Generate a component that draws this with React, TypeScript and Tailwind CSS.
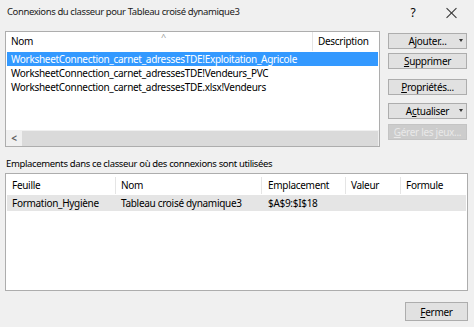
import React from 'react'

const font = { fontFamily: '"Noto Sans", "Open Sans", sans-serif' }

function Btn({ children, arrow = false, disabled = false, className = '' }: { children: React.ReactNode; arrow?: boolean; disabled?: boolean; className?: string }) {
  return (
    <div
      className={`relative h-[16px] flex items-center justify-center border text-[10px] leading-none whitespace-nowrap ${
        disabled ? 'bg-[#cccccc] border-[#c4c4c4] text-[#e9e9e9]' : 'bg-[#e1e1e1] border-[#adadad] text-black'
      } ${className}`}
    >
      <span>{children}</span>
      {arrow && <span className="absolute right-[3px] top-[5px] w-0 h-0 border-l-[2.5px] border-r-[2.5px] border-t-[3px] border-l-transparent border-r-transparent border-t-[#333]" />}
    </div>
  )
}

export default function App() {
  const rows = [
    'WorksheetConnection_carnet_adressesTDE!Exploitation_Agricole',
    'WorksheetConnection_carnet_adressesTDE!Vendeurs_PVC',
    'WorksheetConnection_carnet_adressesTDE.xlsx!Vendeurs',
  ]

  return (
    <div style={font} className="w-[474px] h-[327px] bg-[#f0f0f0] text-black text-[10px] tracking-[-0.3px] overflow-hidden relative">
      {/* Title bar */}
      <div className="h-[31px] flex items-center pl-[7px]">
        <span className="text-[9.5px] tracking-[-0.4px] text-[#1a1a1a] -mt-[6px]">Connexions du classeur pour Tableau croisé dynamique3</span>
        <span className="ml-auto w-[10px] text-center text-[12px] -mt-[6px]">?</span>
        <span className="ml-[28px] mr-[16px] w-[12px] -mt-[6px] relative h-[12px]">
          <span className="absolute left-[5px] top-[-1px] w-[1px] h-[14px] bg-[#333] rotate-45" />
          <span className="absolute left-[5px] top-[-1px] w-[1px] h-[14px] bg-[#333] -rotate-45" />
        </span>
      </div>

      <div className="flex pl-[5px]">
        {/* Connections list */}
        <div className="w-[375px] h-[116px] border border-[#adadad] bg-white flex flex-col relative">
          <span className="absolute left-[155px] -top-[2px] text-[9px] text-[#999]">^</span>
          <div className="h-[20px] flex items-end pb-[1px]">
            <div className="w-[307px] pl-[5px] border-r border-[#e5e5e5] h-[19px] flex items-center">Nom</div>
            <div className="pl-[5px] h-[19px] flex items-center">Description</div>
          </div>
          <div className="flex flex-col">
            {rows.map((r, i) => (
              <div key={r} className={`h-[14px] leading-[14px] mx-[1px] pl-[4px] whitespace-nowrap ${i === 0 ? 'bg-[#3399ff] text-white' : ''}`}>
                {r}
              </div>
            ))}
          </div>
          <div className="mt-auto h-[16px] bg-[#f0f0f0] flex items-center">
            <span className="w-[16px] text-center text-[10px] font-bold text-[#606060]">&lt;</span>
            <div className="flex-1 h-[15px] bg-[#dadada] mr-[1px]" />
          </div>
        </div>

        {/* Buttons */}
        <div className="ml-[8px] w-[79px] flex flex-col pt-[2px]">
          <Btn arrow>A<u>j</u>outer...</Btn>
          <Btn className="mt-[4px]"><u>S</u>upprimer</Btn>
          <Btn className="mt-[10px]"><u>P</u>ropriétés...</Btn>
          <Btn arrow className="mt-[8px]">A<u>c</u>tualiser</Btn>
          <Btn disabled className="mt-[5px]"><u>G</u>érer les jeux...</Btn>
        </div>
      </div>

      <div className="pl-[6px] mt-[9px] h-[16px] leading-[16px] text-[9.5px] tracking-[-0.35px]">Emplacements dans ce classeur où des connexions sont utilisées</div>

      {/* Locations list */}
      <div className="ml-[5px] mt-[1px] w-[463px] h-[118px] border border-[#adadad] bg-white">
        <div className="h-[21px] flex items-center pt-[2px]">
          <div className="w-[110px] pl-[6px] border-r border-[#e5e5e5] h-[17px] flex items-center">Feuille</div>
          <div className="w-[146px] pl-[5px] border-r border-[#e5e5e5] h-[17px] flex items-center">Nom</div>
          <div className="w-[84px] pl-[6px] border-r border-[#e5e5e5] h-[17px] flex items-center">Emplacement</div>
          <div className="w-[55px] pl-[5px] border-r border-[#e5e5e5] h-[17px] flex items-center">Valeur</div>
          <div className="pl-[5px] h-[17px] flex items-center">Formule</div>
        </div>
        <div className="h-[16px] flex items-center bg-[#e5e5e5] mx-[1px]">
          <div className="w-[109px] pl-[5px]">Formation_Hygiène</div>
          <div className="w-[146px] pl-[5px]">Tableau croisé dynamique3</div>
          <div className="w-[84px] pl-[6px]">$A$9:$I$18</div>
        </div>
      </div>

      <div className="flex justify-end pr-[6px] mt-[11px]">
        <Btn className="w-[63px] h-[19px]"><u>F</u>ermer</Btn>
      </div>
    </div>
  )
}
